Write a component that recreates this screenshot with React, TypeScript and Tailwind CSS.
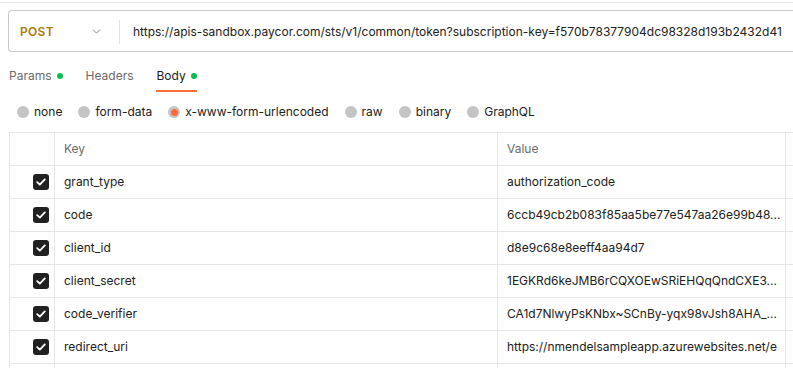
import { ChevronDown } from "lucide-react";

const rows = [
  { key: "grant_type", value: "authorization_code" },
  { key: "code", value: "6ccb49cb2b083f85aa5be77e547aa26e99b48..." },
  { key: "client_id", value: "d8e9c68e8eeff4aa94d7" },
  { key: "client_secret", value: "1EGKRd6keJMB6rCQXOEwSRiEHQqQndCXE3..." },
  { key: "code_verifier", value: "CA1d7NlwyPsKNbx~SCnBy-yqx98vJsh8AHA_..." },
  { key: "redirect_uri", value: "https://nmendelsampleapp.azurewebsites.net/e" },
];

const bodyTypes = ["none", "form-data", "x-www-form-urlencoded", "raw", "binary", "GraphQL"];

function Check() {
  return (
    <div className="w-4 h-4 rounded-[3px] bg-[#212121] flex items-center justify-center">
      <svg width="10" height="8" viewBox="0 0 10 8" fill="none">
        <path d="M1.2 4.2 L3.8 6.6 L8.8 1.4" stroke="white" strokeWidth="1.8" strokeLinecap="round" strokeLinejoin="round" />
      </svg>
    </div>
  );
}

export default function App() {
  return (
    <div
      className="w-[793px] h-[368px] overflow-hidden bg-white text-[12px] text-[#212121]"
      style={{ fontFamily: "Inter, 'Noto Sans', sans-serif" }}
    >
      <div className="border-t border-[#e6e6e6] mt-[2px]" />

      {/* url bar */}
      <div className="pl-2 pt-[7px]">
        <div className="flex items-center h-[42px] border border-[#c9c9c9] rounded-l-[4px] border-r-0 w-[900px] pt-[1px]">
          <div className="flex items-center w-[110px] pl-[11px] pr-2">
            <span className="font-semibold text-[#ab7a06] tracking-[0.3px]">POST</span>
            <ChevronDown className="ml-auto mr-[8px] text-[#6b6b6b]" size={13} strokeWidth={1.5} />
          </div>
          <div className="w-px h-[24px] bg-[#e0e0e0]" />
          <div className="pl-[13px] whitespace-nowrap text-[#212121]">
            https://apis-sandbox.paycor.com/sts/v1/common/token?subscription-key=f570b78377904dc98328d193b2432d41
          </div>
        </div>
      </div>

      {/* tabs */}
      <div className="flex items-end pl-[9px] h-[40px]">
        <div className="flex items-center h-[29px] pb-[4px] text-[#6b6b6b] mr-[23px]">
          Params<span className="ml-[5px] w-[6px] h-[6px] rounded-full bg-[#0cbb52]" />
        </div>
        <div className="flex items-center h-[29px] pb-[4px] text-[#6b6b6b] mr-[23px]">Headers</div>
        <div className="flex items-center h-[29px] pb-[2px] border-b-2 border-[#ff6c37] text-[#212121]">
          Body<span className="ml-[5px] w-[6px] h-[6px] rounded-full bg-[#0cbb52]" />
        </div>
      </div>

      {/* body types */}
      <div className="flex items-center pl-[17px] h-[40px] gap-[16px]">
        {bodyTypes.map((t) => (
          <div key={t} className="flex items-center gap-[5px]">
            {t === "x-www-form-urlencoded" ? (
              <span className="w-3 h-3 rounded-full bg-[#c4c4c4] flex items-center justify-center">
                <span className="w-[7px] h-[7px] rounded-full bg-[#ff6c37]" />
              </span>
            ) : (
              <span className="w-3 h-3 rounded-full bg-[#c4c4c4]" />
            )}
            <span className="text-[#212121]">{t}</span>
          </div>
        ))}
      </div>

      {/* table */}
      <div className="ml-[9px] border-t border-l border-[#e6e6e6] w-[900px]">
        <div className="flex h-[33px] border-b border-[#e6e6e6] text-[#6b6b6b]">
          <div className="w-[45px] border-r border-[#e6e6e6]" />
          <div className="w-[443px] border-r border-[#e6e6e6] flex items-center pl-[9px]">Key</div>
          <div className="w-[288px] border-r border-[#e6e6e6] flex items-center pl-[9px]">Value</div>
          <div className="flex-1" />
        </div>
        {rows.map((r) => (
          <div key={r.key} className="flex h-[33px] border-b border-[#e6e6e6]">
            <div className="w-[45px] border-r border-[#e6e6e6] flex items-center justify-end pr-[5px]">
              <Check />
            </div>
            <div className="w-[443px] border-r border-[#e6e6e6] flex items-center pl-[9px]">{r.key}</div>
            <div className="w-[288px] border-r border-[#e6e6e6] flex items-center pl-[9px] whitespace-nowrap overflow-hidden">
              {r.value}
            </div>
            <div className="flex-1" />
          </div>
        ))}
        <div className="flex h-[33px]">
          <div className="w-[45px] border-r border-[#e6e6e6]" />
          <div className="w-[443px] border-r border-[#e6e6e6]" />
          <div className="w-[288px] border-r border-[#e6e6e6]" />
        </div>
      </div>
    </div>
  );
}
